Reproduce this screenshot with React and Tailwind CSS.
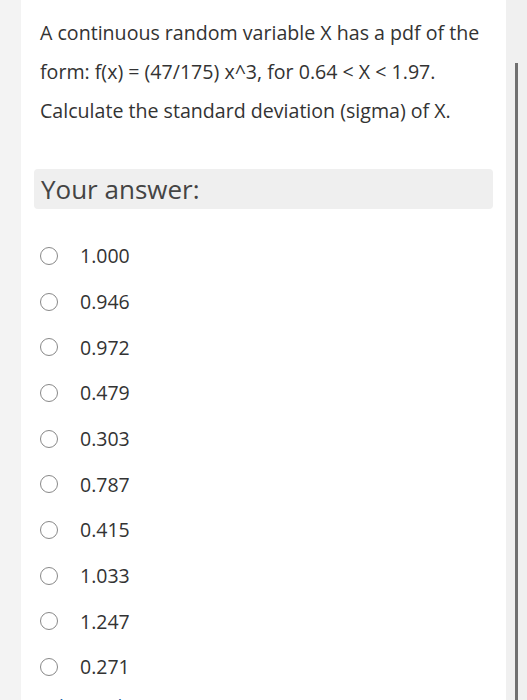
import React from "react";

const options = ["1.000","0.946","0.972","0.479","0.303","0.787","0.415","1.033","1.247","0.271"];

export default function App() {
  return (
    <div className="flex h-[700px] w-[527px] overflow-hidden bg-[#f3f3f3]" style={{fontFamily: '"Open Sans", sans-serif'}}>
      <div className="w-[21px] shrink-0 bg-[#f3f3f3]" />
      <div className="flex w-[485px] shrink-0 flex-col bg-white">
        <div className="pl-[19px] pr-[6px] pt-[13px] text-[19.6px] leading-[39px] text-[#333]">
          <p className="whitespace-nowrap">A continuous random variable X has a pdf of the</p>
          <p className="whitespace-nowrap">form: f(x) = (47/175) x^3, for 0.64 &lt; X &lt; 1.97.</p>
          <p className="whitespace-nowrap">Calculate the standard deviation (sigma) of X.</p>
        </div>
        <div className="mx-[13px] mt-[39px] flex h-[40px] shrink-0 items-center rounded-[4px] bg-[#efefef] px-[7px] text-[26px] text-[#444]">
          Your answer:
        </div>
        <div className="mt-[24px] flex flex-col pl-[19px]">
          {options.map((o) => (
            <div key={o} className="flex h-[45.7px] shrink-0 items-center">
              <span className="h-[18px] w-[18px] rounded-full border-[1.5px] border-[#888] bg-white" />
              <span className="ml-[22px] text-[19.5px] text-[#333]">{o}</span>
            </div>
          ))}
          <div className="ml-[7px] mt-[2px] text-[19px] text-[#1a5fa8]">Clear selection</div>
        </div>
      </div>
      <div className="flex flex-1 justify-center bg-[#f0f0f0] pt-[63px]">
        <div className="h-full w-[3px] bg-[#707070]" />
      </div>
    </div>
  );
}
